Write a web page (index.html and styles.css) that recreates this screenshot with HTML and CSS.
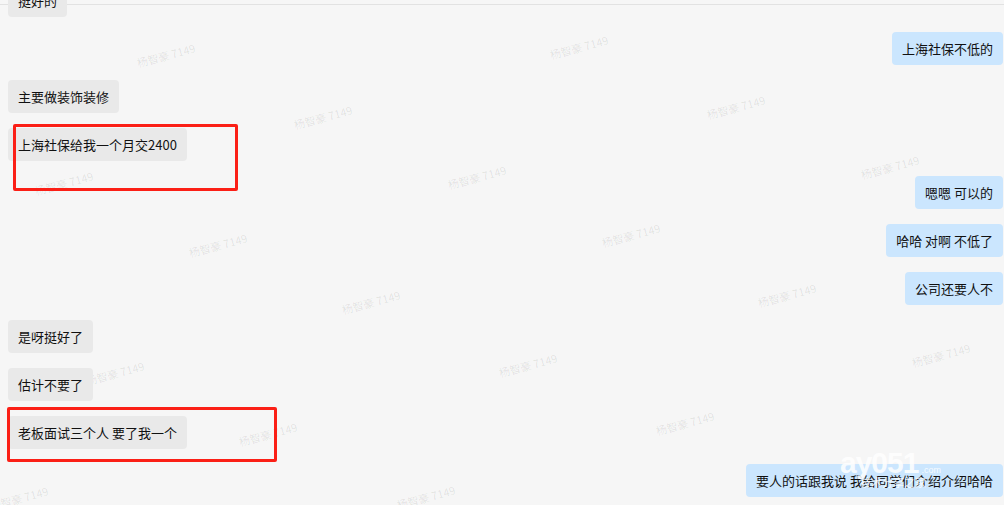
FILE: index.html
```html
<!DOCTYPE html>
<html lang="zh-CN">
<head>
    <meta charset="UTF-8">
    <meta name="viewport" content="width=device-width, initial-scale=1.0">
    <title>聊天记录</title>
    <link rel="stylesheet" href="styles.css">
</head>
<body>
    <div class="top-line"></div>

    <!-- watermark layer, sits behind the bubbles -->
    <div class="watermarks">
        <span class="wm" style="left:166px;top:55px">杨智豪 7149</span>
        <span class="wm" style="left:579px;top:47px">杨智豪 7149</span>
        <span class="wm" style="left:992px;top:39px">杨智豪 7149</span>
        <span class="wm" style="left:323px;top:117px">杨智豪 7149</span>
        <span class="wm" style="left:736px;top:107px">杨智豪 7149</span>
        <span class="wm" style="left:64px;top:183px">杨智豪 7149</span>
        <span class="wm" style="left:477px;top:177px">杨智豪 7149</span>
        <span class="wm" style="left:890px;top:167px">杨智豪 7149</span>
        <span class="wm" style="left:218px;top:245px">杨智豪 7149</span>
        <span class="wm" style="left:631px;top:235px">杨智豪 7149</span>
        <span class="wm" style="left:371px;top:302px">杨智豪 7149</span>
        <span class="wm" style="left:787px;top:295px">杨智豪 7149</span>
        <span class="wm" style="left:115px;top:373px">杨智豪 7149</span>
        <span class="wm" style="left:528px;top:365px">杨智豪 7149</span>
        <span class="wm" style="left:941px;top:355px">杨智豪 7149</span>
        <span class="wm" style="left:268px;top:434px">杨智豪 7149</span>
        <span class="wm" style="left:685px;top:423px">杨智豪 7149</span>
        <span class="wm" style="left:19px;top:498px">杨智豪 7149</span>
        <span class="wm" style="left:426px;top:497px">杨智豪 7149</span>
    </div>

    <div class="chat">
        <div class="row left"><div class="bubble">挺好的</div></div>
        <div class="row right"><div class="bubble">上海社保不低的</div></div>
        <div class="row left"><div class="bubble">主要做装饰装修</div></div>
        <div class="row left"><div class="bubble">上海社保给我一个月交2400</div></div>
        <div class="row right"><div class="bubble">嗯嗯 可以的</div></div>
        <div class="row right"><div class="bubble">哈哈 对啊 不低了</div></div>
        <div class="row right"><div class="bubble">公司还要人不</div></div>
        <div class="row left"><div class="bubble">是呀挺好了</div></div>
        <div class="row left"><div class="bubble">估计不要了</div></div>
        <div class="row left"><div class="bubble">老板面试三个人 要了我一个</div></div>
        <div class="row right"><div class="bubble">要人的话跟我说 我给同学们介绍介绍哈哈</div></div>
    </div>

    <!-- annotation boxes drawn on top of the screenshot -->
    <div class="mark mark-1"></div>
    <div class="mark mark-2"></div>

    <div class="site-logo">
        <span class="logo-main">ay051</span><span class="logo-dot">.com</span>
        <span class="logo-sub">技术分享之家</span>
    </div>
</body>
</html>
```

FILE: styles.css
```css
html, body {
    margin: 0;
    height: 100%;
}
body {
    background-color: #f6f6f6;
    font-family: "Noto Sans CJK SC", "Noto Sans", sans-serif;
    font-size: 13px;
    color: #111;
    position: relative;
    overflow: hidden;
}
.top-line {
    position: absolute;
    left: 0;
    right: 0;
    top: 4px;
    height: 1px;
    background-color: #e2e2e2;
}
.watermarks {
    position: absolute;
    inset: 0;
    pointer-events: none;
}
.wm {
    position: absolute;
    white-space: nowrap;
    font-size: 11px;
    color: rgba(0, 0, 0, 0.09);
    transform: translate(-50%, -50%) rotate(-15deg);
}
.chat {
    position: relative;
    display: flex;
    flex-direction: column;
    gap: 15px;
    margin-top: -16px;
    padding: 0 1px 0 8px;
}
.row {
    display: flex;
}
.row.left {
    justify-content: flex-start;
}
.row.right {
    justify-content: flex-end;
}
.bubble {
    padding: 8px 10px;
    line-height: 17px;
    border-radius: 4px;
    white-space: nowrap;
}
.left .bubble {
    background-color: #e9e9e9;
}
.right .bubble {
    background-color: #cbe6fe;
}
.mark {
    position: absolute;
    border: 3px solid #fb1f16;
    border-radius: 2px;
    box-sizing: border-box;
}
.mark-1 {
    left: 13px;
    top: 124px;
    width: 225px;
    height: 67px;
}
.mark-2 {
    left: 7px;
    top: 407px;
    width: 270px;
    height: 55px;
}
.site-logo {
    position: absolute;
    left: 840px;
    top: 446px;
    color: rgba(255, 255, 255, 0.85);
    pointer-events: none;
}
.logo-main {
    font-family: "Liberation Sans", sans-serif;
    font-weight: bold;
    font-size: 30px;
    letter-spacing: -1px;
}
.logo-dot {
    font-family: "Liberation Sans", sans-serif;
    font-size: 9px;
    margin-left: 3px;
}
.logo-sub {
    display: block;
    margin-top: -6px;
    margin-left: 20px;
    font-size: 11px;
}
```
